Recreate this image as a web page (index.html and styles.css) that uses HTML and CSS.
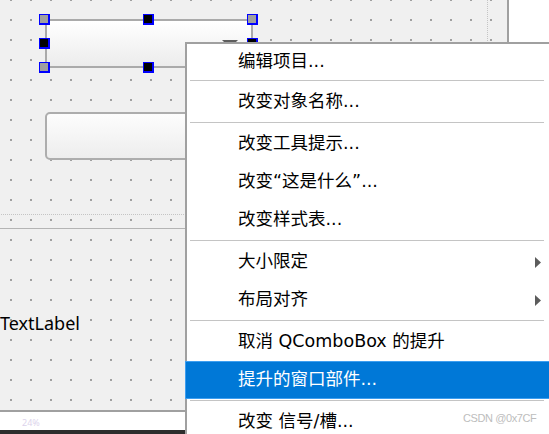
FILE: index.html
```html
<!DOCTYPE html>
<html lang="zh-CN">
<head>
<meta charset="utf-8">
<title>Qt Designer context menu</title>
<link rel="stylesheet" href="styles.css">
</head>
<body>
<div class="screen">
  <div class="form">
    <div class="layout-frame"></div>
    <div class="layout-line"></div>
    <div class="combo"><span class="combo-arrow"></span></div>
    <span class="handle corner h-tl"></span>
    <span class="handle h-tm"></span>
    <span class="handle corner h-tr"></span>
    <span class="handle h-ml"></span>
    <span class="handle h-mr"></span>
    <span class="handle corner h-bl"></span>
    <span class="handle h-bm"></span>
    <span class="handle corner h-br"></span>
    <div class="push"></div>
    <div class="label">TextLabel</div>
  </div>
  <div class="status">24%</div>
  <div class="taskbar"></div>
</div>

<div class="menu">
  <div class="item">编辑项目...</div>
  <div class="sep"></div>
  <div class="item">改变对象名称...</div>
  <div class="sep"></div>
  <div class="item">改变工具提示...</div>
  <div class="item">改变“这是什么”...</div>
  <div class="item">改变样式表...</div>
  <div class="sep"></div>
  <div class="item">大小限定<svg class="arrow" viewBox="0 0 6 11"><polygon points="0,0 6,5.5 0,11"/></svg></div>
  <div class="item">布局对齐<svg class="arrow" viewBox="0 0 6 11"><polygon points="0,0 6,5.5 0,11"/></svg></div>
  <div class="sep"></div>
  <div class="item">取消 QComboBox 的提升</div>
  <div class="item active">提升的窗口部件...</div>
  <div class="sep"></div>
  <div class="item">改变 信号/槽...</div>
</div>

<div class="watermark">CSDN @0x7CF</div>
</body>
</html>
```

FILE: styles.css
```css
html, body {
  margin: 0;
  padding: 0;
}

body {
  width: 549px;
  height: 434px;
  overflow: hidden;
  position: relative;
  background: #ffffff;
  font-family: "Noto Sans", "Noto Sans CJK SC", sans-serif;
}

.screen {
  width: 549px;
}

/* designer form canvas with 20px grid dots */
.form {
  position: relative;
  width: 507px;
  height: 410px;
  border-right: 2px solid #a0a0a0;
  border-bottom: 2px solid #a0a0a0;
  background-color: #f0f0f0;
  background-image: conic-gradient(from 270deg at 2px 2px, #a0a0a0 25%, transparent 0);
  background-size: 20px 20px;
  background-position: 10px 19px;
  overflow: hidden;
}

.layout-frame {
  position: absolute;
  left: -20px;
  top: -20px;
  width: 507px;
  height: 234px;
  border-right: 1px dotted #c4c4c4;
  border-bottom: 1px dotted #c4c4c4;
}

.layout-line {
  position: absolute;
  left: 0;
  right: 0;
  top: 228px;
  height: 1px;
  background: #b4b4b4;
}

.combo {
  position: absolute;
  left: 45px;
  top: 19px;
  width: 208px;
  height: 49px;
  box-sizing: border-box;
  border: 2px solid #aaaaaa;
  background: linear-gradient(#ffffff, #ececec);
  display: flex;
  align-items: center;
  justify-content: flex-end;
  padding-right: 13px;
}

.combo-arrow {
  width: 0;
  height: 0;
  border-left: 8px solid transparent;
  border-right: 8px solid transparent;
  border-top: 8px solid #5e5e5e;
}

.handle {
  position: absolute;
  width: 8px;
  height: 8px;
  border-style: solid;
  border-color: #0000ff;
  border-width: 1px 2px 2px 1px;
  background: #000000;
}

.handle.corner {
  background: #a0a0a0;
}

.h-tl { left: 39px; top: 14px; }
.h-tm { left: 143px; top: 14px; }
.h-tr { left: 247px; top: 14px; }
.h-ml { left: 39px; top: 38px; }
.h-mr { left: 247px; top: 38px; }
.h-bl { left: 39px; top: 62px; }
.h-bm { left: 143px; top: 62px; }
.h-br { left: 247px; top: 62px; }

.push {
  position: absolute;
  left: 45px;
  top: 112px;
  width: 208px;
  height: 48px;
  box-sizing: border-box;
  border: 2px solid #adadad;
  border-radius: 5px;
  background: linear-gradient(#fdfdfd, #ededed);
}

.label {
  position: absolute;
  left: 0;
  top: 311px;
  font-size: 18px;
  line-height: 24px;
  color: #000000;
}

.status {
  height: 18px;
  box-sizing: border-box;
  padding: 6px 0 0 22px;
  font-size: 9px;
  line-height: 9px;
  color: #dcd4ec;
  background: #ffffff;
}

.taskbar {
  height: 4px;
  background: #2d2d2d;
}

/* context menu */
.menu {
  position: absolute;
  left: 185px;
  top: 42px;
  width: 380px;
  border-top: 2px solid #a0a0a0;
  border-left: 2px solid #a0a0a0;
  background: #ffffff;
  font-family: "DejaVu Sans", "Noto Sans CJK SC", sans-serif;
  font-size: 17.5px;
  color: #000000;
}

.item {
  height: 38px;
  box-sizing: border-box;
  display: flex;
  align-items: center;
  padding-left: 51px;
  line-height: 1;
  white-space: nowrap;
}

.item:first-child {
  height: 35px;
}

.item.active {
  margin-left: -2px;
  padding-left: 52px;
  border: 1px solid #3d9ef0;
  border-right: none;
  background: #0078d7;
  color: #ffffff;
}

.sep {
  height: 1px;
  margin: 1px 23px 2px 3px;
  background: #c4c4c4;
}

.arrow {
  margin-left: auto;
  margin-right: 26px;
  width: 6px;
  height: 11px;
  fill: #5c5c5c;
}

.watermark {
  position: absolute;
  left: 463px;
  top: 412px;
  font-family: "Liberation Sans", Arial, sans-serif;
  font-size: 11px;
  letter-spacing: -0.4px;
  color: #bdbdbd;
}
```
